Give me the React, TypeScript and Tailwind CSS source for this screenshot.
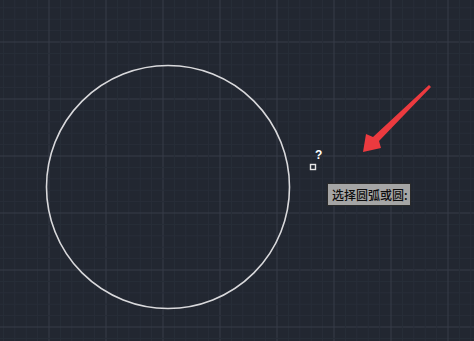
export default function App() {
  const minor: number[] = [];
  for (let i = -10; i < 60; i++) minor.push(i);

  return (
    <main className="relative w-[474px] h-[341px] overflow-hidden bg-[#222731]">
      {/* drawing canvas */}
      <svg className="absolute inset-0" width="474" height="341" viewBox="0 0 474 341">
        {minor.map((i) => {
          const x = 49 + i * 11.4;
          const y = 42 + i * 11.4;
          const major = i % 5 === 0;
          const c = major ? "#363c48" : "#282e39";
          return (
            <g key={i}>
              <line x1={x} y1={0} x2={x} y2={341} stroke={c} strokeWidth={1} />
              <line x1={0} y1={y} x2={474} y2={y} stroke={c} strokeWidth={1} />
            </g>
          );
        })}

        <circle cx={168} cy={187} r={121.5} fill="none" stroke="#d9d9dc" strokeWidth={1.6} />

        {/* red pointer arrow */}
        <polygon
          points="429,85 431,87 379,141 381,148 363,152 366,134 373,137"
          fill="#ec3a3f"
        />

        {/* pick box cursor */}
        <rect x={310.5} y={164.5} width={5} height={5} fill="none" stroke="#e6e6e6" strokeWidth={1.4} />
      </svg>

      <span className="absolute left-[315px] top-[149px] text-[12px] font-bold leading-none text-white font-['Liberation_Sans',sans-serif]">
        ?
      </span>

      {/* command prompt tooltip */}
      <div className="absolute left-[327px] top-[183px] w-[84px] h-[23px] border border-[#2a2a2a] bg-[#a5a5a5] pl-[4px] flex items-center">
        <span className="text-[12px] font-medium leading-none text-[#0d0d0d] font-['Noto_Sans_CJK_SC','Noto_Sans',sans-serif]">
          选择圆弧或圆:
        </span>
      </div>
    </main>
  );
}
